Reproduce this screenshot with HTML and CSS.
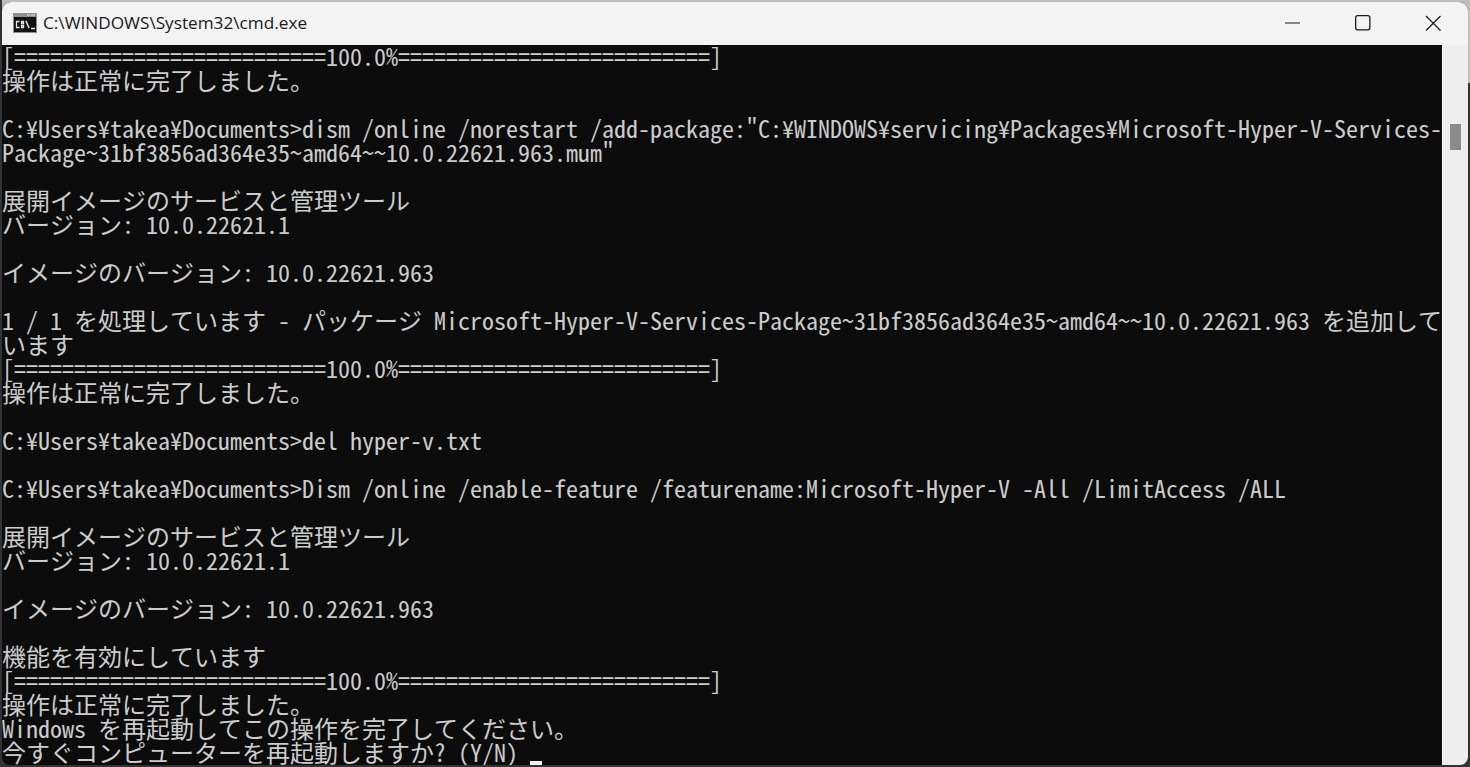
FILE: index.html
```html
<!DOCTYPE html>
<html lang="ja">
<head>
<meta charset="utf-8">
<title>cmd.exe</title>
<link rel="stylesheet" href="styles.css">
</head>
<body>
<div class="window">
  <header class="titlebar">
    <svg class="app-icon" width="24" height="20" viewBox="0 0 24 20">
      <rect width="24" height="20" fill="#8f8f8f"/>
      <rect x="1" y="4" width="22" height="15" fill="#111"/>
      <rect x="14" y="1.5" width="3" height="1" fill="#e4e4e4"/><rect x="18" y="1.5" width="4" height="1" fill="#e4e4e4"/>
      <path d="M6.5 8.5H3.5V14.5H6.5M8.5 8.5h2v2h-2zM8.5 12.5h2v2h-2zM18 15.5h4" fill="none" stroke="#e8e8e8" stroke-width="1.3"/>
      <path d="M13 8l3 7" fill="none" stroke="#e8e8e8" stroke-width="1.5"/>
    </svg>
    <span class="title">C:\WINDOWS\System32\cmd.exe</span>
    <div class="controls">
      <svg class="ctl" width="16" height="16" viewBox="0 0 16 16"><path d="M0 8H15" stroke="#1a1a1a" stroke-width="1.1"/></svg>
      <svg class="ctl" width="16" height="16" viewBox="0 0 16 16"><rect x="0.65" y="0.65" width="14.2" height="14.2" rx="2" fill="none" stroke="#1a1a1a" stroke-width="1.3"/></svg>
      <svg class="ctl" width="16" height="16" viewBox="0 0 16 16"><path d="M1 1L15.5 15.5M15.5 1L1 15.5" stroke="#1a1a1a" stroke-width="1.2"/></svg>
    </div>
  </header>
  <div class="body">
    <pre class="console">[==========================100.0%==========================]
操作は正常に完了しました。

C:¥Users¥takea¥Documents&gt;dism /online /norestart /add-package:"C:¥WINDOWS¥servicing¥Packages¥Microsoft-Hyper-V-Services-
Package~31bf3856ad364e35~amd64~~10.0.22621.963.mum"

展開イメージのサービスと管理ツール
バージョン: 10.0.22621.1

イメージのバージョン: 10.0.22621.963

1 / 1 を処理しています - パッケージ Microsoft-Hyper-V-Services-Package~31bf3856ad364e35~amd64~~10.0.22621.963 を追加して
います
[==========================100.0%==========================]
操作は正常に完了しました。

C:¥Users¥takea¥Documents&gt;del hyper-v.txt

C:¥Users¥takea¥Documents&gt;Dism /online /enable-feature /featurename:Microsoft-Hyper-V -All /LimitAccess /ALL

展開イメージのサービスと管理ツール
バージョン: 10.0.22621.1

イメージのバージョン: 10.0.22621.963

機能を有効にしています
[==========================100.0%==========================]
操作は正常に完了しました。
Windows を再起動してこの操作を完了してください。
今すぐコンピューターを再起動しますか? (Y/N) <span class="cursor"></span></pre>
    <div class="scrollbar"><div class="thumb"></div></div>
  </div>
</div>
</body>
</html>
```
FILE: styles.css
```css
html, body { margin: 0; height: 100%; overflow: hidden; }
body {
  background-color: #333333;
  background-image: linear-gradient(#333333, #333333), linear-gradient(#bdbdbd, #bdbdbd);
  background-position: left top, left top;
  background-size: 2px 100%, 100% 83px;
  background-repeat: no-repeat;
}
.window { height: 763px; margin: 2px 2px 2px 2px; display: flex; flex-direction: column; border-radius: 9px 9px 8px 8px; overflow: hidden; background: #0c0c0c; }
.titlebar { height: 43px; flex: none; box-sizing: border-box; padding: 0 0 2px 11px; background: #f3f3f3; display: flex; align-items: center; }
.app-icon { flex: none; margin-right: 6px; }
.title { font: 17.2px "Open Sans", "Liberation Sans", sans-serif; color: #1a1a1a; }
.controls { margin-left: auto; display: flex; align-items: center; gap: 54px; padding-right: 27px; }
.body { flex: 1; min-height: 0; display: flex; }
.console { flex: 1; min-width: 0; margin: -1px 0 0 0; padding: 0; color: #cccccc; font: 24px/24px "Noto Sans CJK JP", monospace; font-feature-settings: "hwid"; font-kerning: none; white-space: pre; }
.cursor { display: inline-block; width: 12px; height: 5px; background: #f2f2f2; vertical-align: -4px; }
.scrollbar { width: 26px; flex: none; background: #eeeeee; border-left: 1px solid #fff; position: relative; box-sizing: border-box; }
.thumb { position: absolute; left: 7px; top: 79px; width: 11px; height: 26px; background: #8b8b8b; }
```
